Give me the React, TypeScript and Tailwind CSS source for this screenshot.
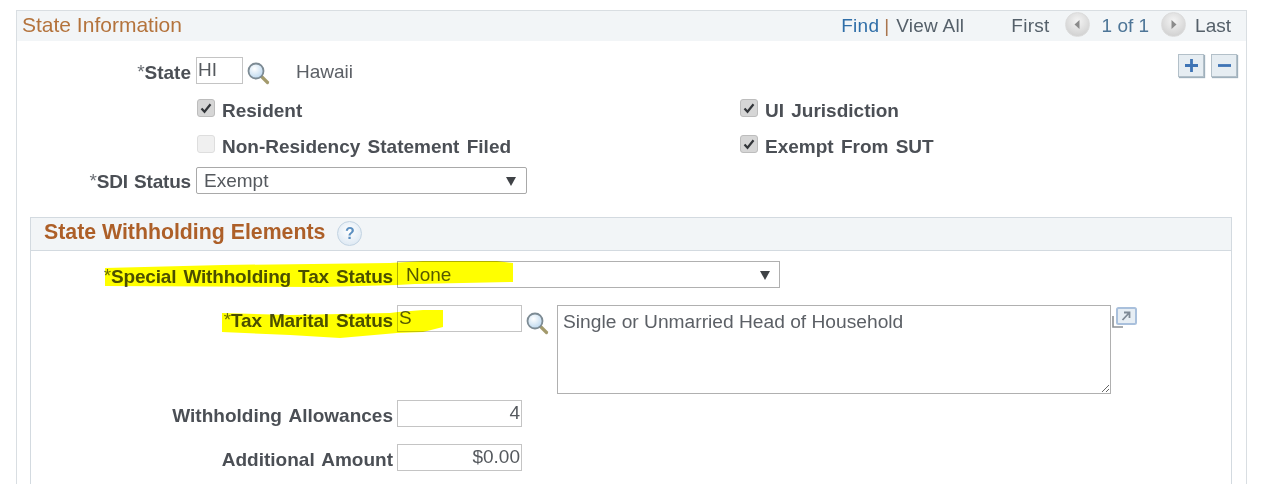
const labelCls = "text-[19px] leading-none font-bold text-[#4b4f55] text-right whitespace-nowrap [word-spacing:2px]";
const inputCls = "border-[1.5px] border-[#c4c4c4] bg-transparent outline-none text-[19px] text-[#55595e]";

function Lookup() {
  return (
    <svg width="24" height="24" viewBox="0 0 24 24" className="shrink-0">
      <defs>
        <radialGradient id="lens" cx="0.4" cy="0.35" r="0.7">
          <stop offset="0" stopColor="#ffffff" />
          <stop offset="1" stopColor="#b9d6ee" />
        </radialGradient>
      </defs>
      <path d="M15 15l6.5 6.5" stroke="#a39a6c" strokeWidth="3.2" strokeLinecap="round" />
      <circle cx="10" cy="10" r="7.5" fill="url(#lens)" stroke="#7d8b94" strokeWidth="1.8" />
    </svg>
  );
}

function Check({ checked = true }: { checked?: boolean }) {
  return (
    <span
      className={
        checked
          ? "w-[18px] h-[18px] rounded-[3px] bg-[#d6d6d6] border border-[#bdbdbd] flex items-center justify-center shrink-0"
          : "w-[18px] h-[18px] rounded-[3px] bg-[#f0f0f0] border border-[#dedede] shrink-0"
      }
    >
      {checked && (
        <svg width="12" height="12" viewBox="0 0 12 12">
          <path d="M1.5 6.5l3 3.2 6-7.5" fill="none" stroke="#33363a" strokeWidth="2.2" />
        </svg>
      )}
    </span>
  );
}

function CheckRow({ label, checked }: { label: string; checked?: boolean }) {
  return (
    <label className={labelCls + " flex items-start gap-[7px] h-[18px]"}>
      <Check checked={checked} />
      <span className="mt-[2px]">{label}</span>
    </label>
  );
}

function Pager({ right = false }: { right?: boolean }) {
  return (
    <span className="w-[25px] h-[25px] rounded-full bg-[radial-gradient(circle_at_50%_35%,#f4f4f4,#c9c9c9)] border border-[#dcdcdc] flex items-center justify-center -mt-[4px]">
      <svg width="8" height="11" viewBox="0 0 8 11">
        <path d={right ? "M1.5 1l5 4.5-5 4.5z" : "M6.5 1l-5 4.5 5 4.5z"} fill="#8b8b8b" />
      </svg>
    </span>
  );
}

function Caret() {
  return (
    <svg width="10" height="9" viewBox="0 0 10 9" className="shrink-0">
      <path d="M0 0h10L5 9z" fill="#3f4246" />
    </svg>
  );
}

function Star() {
  return <span className="font-normal text-[#6b6f75] -translate-y-[1px]">*</span>;
}

function Row({ label, req, tight, children }: { label: string; req?: boolean; tight?: boolean; children: React.ReactNode }) {
  return (
    <div className="flex items-start">
      <div className={labelCls + " w-[361px] pr-[4px] h-[27px] flex items-center justify-end pt-[4px]"}>
        {req && <Star />}
        <span className={tight ? "tracking-[-0.18px]" : ""}>{label}</span>
      </div>
      {children}
    </div>
  );
}

export default function App() {
  return (
    <div className="relative w-[1266px] h-[499px] bg-white overflow-hidden font-['Liberation_Sans',Arial,sans-serif] pl-[16px] pt-[10px]">
      <div className="w-[1231px] h-[474px] border-[1.5px] border-b-0 border-[#d9dee2]">
        {/* Header */}
        <div className="h-[30px] bg-[#f2f5f7] flex items-center pl-[5px] pr-[15px] text-[19px] text-[#55606a]">
          <span className="text-[21px] text-[#b4733c] -mt-[2px]">State Information</span>
          <span className="ml-auto text-[#2f6ea8] mt-[1px] tracking-[0.25px]">Find</span>
          <span className="ml-[5px] text-[#a9754d] mt-[1px]">|</span>
          <span className="ml-[7px] mt-[1px] tracking-[0.25px]">View All</span>
          <span className="ml-[47px] mt-[1px] tracking-[0.25px]">First</span>
          <span className="ml-[15px] flex"><Pager /></span>
          <span className="ml-[12px] text-[#4d7597] mt-[1px]">1 of 1</span>
          <span className="ml-[12px] flex"><Pager right /></span>
          <span className="ml-[9px] mt-[1px]">Last</span>
        </div>

        {/* State row */}
        <div className="flex items-start mt-[16px]">
          <div className={labelCls + " w-[174px] h-[27px] flex items-center justify-end pt-[3px]"}>
            <Star />State
          </div>
          <input readOnly value="HI" className={inputCls + " ml-[5px] w-[47px] h-[27px] pl-[1px]"} />
          <span className="ml-[3px] mt-[4px]"><Lookup /></span>
          <span className="ml-[26px] mt-[3px] text-[19px] text-[#5c6066] leading-[24px]">Hawaii</span>
          <div className="ml-auto mr-[9px] -mt-[3px] flex gap-[7px]">
            <span className="w-[26px] h-[23px] bg-[#e6edf2] border border-[#b3c0c9] shadow-[1px_1px_1px_#9fb0bc] flex items-center justify-center">
              <svg width="13" height="13" viewBox="0 0 13 13"><path d="M6.5 0v13M0 6.5h13" stroke="#3f74b5" strokeWidth="2.8" /></svg>
            </span>
            <span className="w-[26px] h-[23px] bg-[#e6edf2] border border-[#b3c0c9] shadow-[1px_1px_1px_#9fb0bc] flex items-center justify-center">
              <svg width="13" height="13" viewBox="0 0 13 13"><path d="M0 6.5h13" stroke="#3f74b5" strokeWidth="2.8" /></svg>
            </span>
          </div>
        </div>

        {/* Checkboxes */}
        <div className="grid grid-cols-[543px_1fr] ml-[180px] mt-[14px] gap-y-[18px]">
          <CheckRow label="Resident" />
          <CheckRow label="UI Jurisdiction" />
          <CheckRow label="Non-Residency Statement Filed" checked={false} />
          <CheckRow label="Exempt From SUT" />
        </div>

        {/* SDI */}
        <div className="flex items-start mt-[14px]">
          <div className={labelCls + " w-[174px] h-[27px] flex items-center justify-end pt-[2px]"}>
            <Star /><span className="tracking-[-0.18px] [word-spacing:1px]">SDI Status</span>
          </div>
          <div className="ml-[5px] w-[331px] h-[27px] border-[1.5px] border-[#a9a9a9] rounded-[2px] flex items-center justify-between pl-[7px] pr-[10px] pt-[1px] text-[19px] text-[#55595e]">
            Exempt <Caret />
          </div>
        </div>

        {/* State Withholding Elements */}
        <div className="ml-[13px] mt-[23px] w-[1202px] h-[267px] border-[1.5px] border-b-0 border-[#d3dae0]">
          <div className="h-[33px] bg-[#f2f5f7] border-b-[1.5px] border-[#d3dae0] flex items-center pl-[13px]">
            <span className="text-[21.3px] font-bold text-[#ad5f28] -mt-[2px]">State Withholding Elements</span>
            <span className="ml-[12px] w-[25px] h-[25px] rounded-full bg-[radial-gradient(circle_at_50%_40%,#ffffff,#d5e3f0)] border-[1.5px] border-[#c2d3e2] flex items-center justify-center text-[16px] font-bold text-[#5b8fc0] -mt-[1px]">?</span>
          </div>

          <div className="mt-[10px] ml-[5px]">
            <Row label="Special Withholding Tax Status" req tight>
              <div className="w-[383px] h-[27px] border-[1.5px] border-[#b0b0b0] flex items-center justify-between pl-[8px] pr-[9px] pt-[1px] text-[19px] text-[#55595e]">
                None <Caret />
              </div>
            </Row>
          </div>

          <div className="mt-[17px] ml-[5px]">
            <Row label="Tax Marital Status" req tight>
              <input readOnly value="S" className={inputCls + " w-[125px] h-[27px] pl-[1px]"} />
              <span className="ml-[3px] mt-[6px]"><Lookup /></span>
              <textarea
                readOnly
                value="Single or Unmarried Head of Household"
                className="ml-[8px] w-[554px] h-[89px] border-[1.5px] border-[#b0b0b0] outline-none text-[19.2px] leading-[22px] text-[#5c6066] pl-[5px] pt-[5px]"
              />
              <svg width="25" height="22" viewBox="0 0 25 22" className="ml-[1px] mt-[2px]">
                <path d="M1 9v11h10" fill="none" stroke="#8d9195" strokeWidth="1.6" />
                <rect x="5" y="1" width="19" height="16" rx="1.5" fill="#e7eef4" stroke="#a9c0dc" strokeWidth="2" />
                <path d="M10.5 13l7-7.5M12 5.5h5.5V11" fill="none" stroke="#7f8a96" strokeWidth="1.8" />
              </svg>
            </Row>
          </div>

          <div className="mt-[6px] ml-[5px]">
            <Row label="Withholding Allowances">
              <input readOnly value="4" className={inputCls + " w-[125px] h-[27px] text-right pr-[1px]"} />
            </Row>
          </div>

          <div className="mt-[17px] ml-[5px]">
            <Row label="Additional Amount">
              <input readOnly value="$0.00" className={inputCls + " w-[125px] h-[27px] text-right pr-[1px]"} />
            </Row>
          </div>
        </div>
      </div>

      {/* Marker highlights drawn over the labels */}
      <svg width="1266" height="499" className="absolute left-0 top-0 pointer-events-none mix-blend-multiply">
        <path d="M105 268L223 265L390 263L423 261L497 261L513 263L513 282L415 284L397 285L323 287L105 286z" fill="#ffff00" />
        <path d="M222 313L290 315L390 313L398 312L423 310L443 310L443 327L423 332L397 333L340 338L290 335L222 332z" fill="#ffff00" />
      </svg>
    </div>
  );
}
